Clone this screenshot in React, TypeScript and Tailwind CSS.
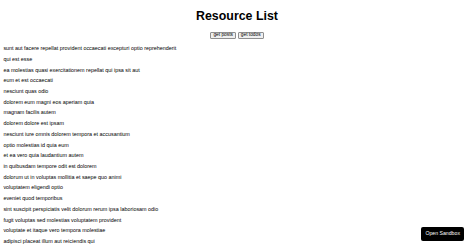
import React, { useState } from "react";

const posts = [
  "sunt aut facere repellat provident occaecati excepturi optio reprehenderit",
  "qui est esse",
  "ea molestias quasi exercitationem repellat qui ipsa sit aut",
  "eum et est occaecati",
  "nesciunt quas odio",
  "dolorem eum magni eos aperiam quia",
  "magnam facilis autem",
  "dolorem dolore est ipsam",
  "nesciunt iure omnis dolorem tempora et accusantium",
  "optio molestias id quia eum",
  "et ea vero quia laudantium autem",
  "in quibusdam tempore odit est dolorem",
  "dolorum ut in voluptas mollitia et saepe quo animi",
  "voluptatem eligendi optio",
  "eveniet quod temporibus",
  "sint suscipit perspiciatis velit dolorum rerum ipsa laboriosam odio",
  "fugit voluptas sed molestias voluptatem provident",
  "voluptate et itaque vero tempora molestiae",
  "adipisci placeat illum aut reiciendis qui",
  "doloribus ad provident suscipit at",
];

const App = () => {
  const [resource, setResource] = useState("posts");

  return (
    <div className="min-h-screen bg-white text-black px-[3.4px] font-['Liberation_Sans',Arial,sans-serif]">
      <h1 className="pt-[9.4px] text-center text-[12.4px] leading-[14px] font-bold">
        Resource List
      </h1>
      <div className="mt-[8.6px] flex justify-center gap-[2px]">
        <button
          onClick={() => setResource("posts")}
          className="h-[7.5px] px-[2px] border-[0.5px] border-[#8f8f8f] bg-[#efefef] rounded-[1px] text-[4.8px] leading-none"
        >
          get posts
        </button>
        <button
          onClick={() => setResource("todos")}
          className="h-[7.5px] px-[2px] border-[0.5px] border-[#8f8f8f] bg-[#efefef] rounded-[1px] text-[4.8px] leading-none"
        >
          get todos
        </button>
      </div>
      <ul className="mt-[3.6px]" data-resource={resource}>
        {posts.map((title, index) => (
          <li key={index} className="text-[5.4px] leading-[10.72px]">
            {title}
          </li>
        ))}
      </ul>
      <button className="fixed bottom-[7px] right-[10px] h-[14px] px-[4px] bg-black text-white text-[5.2px] rounded-[2px]">
        Open Sandbox
      </button>
    </div>
  );
};

export default App;
